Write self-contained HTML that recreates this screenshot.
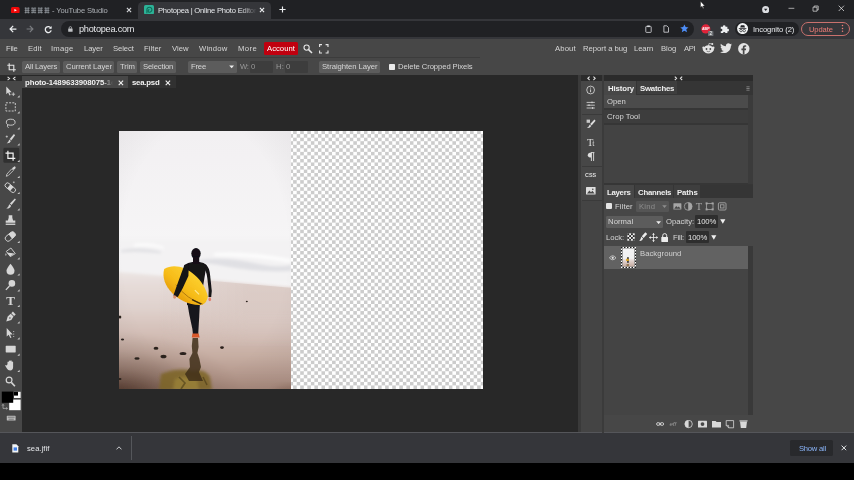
<!DOCTYPE html>
<html><head><meta charset="utf-8"><title>Photopea</title>
<style>
html,body{margin:0;padding:0;background:#000;}
body{width:854px;height:480px;overflow:hidden;position:relative;font-family:"Liberation Sans",sans-serif;}
#r{position:absolute;left:0;top:0;width:854px;height:480px;overflow:hidden;}
#r span,#r svg{will-change:transform;}
#r div,#r span,#r svg{position:absolute;display:block;}
#r span{white-space:nowrap;}
</style></head><body><div id="r">
<div style="left:0px;top:0px;width:854px;height:18.5px;background:#202124;"></div>
<div style="left:138.2px;top:1.6px;width:133.2px;height:17.4px;background:#35363a;border-radius:4.5px 4.5px 0 0;"></div>
<div style="left:0px;top:18.5px;width:854px;height:20.5px;background:#35363a;"></div>
<div style="left:60.5px;top:21.1px;width:633.5px;height:15.8px;background:#202124;border-radius:8px;"></div>
<div style="left:0px;top:39px;width:854px;height:393.5px;background:#474747;"></div>
<div style="left:21.8px;top:75px;width:556.6px;height:357.5px;background:#282828;"></div>
<div style="left:578.4px;top:75px;width:2.6px;height:357.5px;background:#3a3a3a;"></div>
<div style="left:0px;top:75px;width:21.8px;height:6px;background:#2b2b2b;"></div>
<div style="left:0px;top:432.3px;width:854px;height:30.4px;background:#35363a;border-top:0.6px solid #55565a;"></div>
<div style="left:0px;top:462.7px;width:854px;height:17.3px;background:#000;"></div>
<div style="left:290.4px;top:131.2px;width:192.8px;height:258.1px;background-color:#fff;background-image:conic-gradient(#ccc 25%,#fff 0 50%,#ccc 0 75%,#fff 0);background-size:7.08px 7.08px;background-position:-0.4px -0.4px;"></div>
<svg style="left:118.8px;top:131.2px;overflow:hidden;" width="171.6" height="258.1" viewBox="0 0 171.6 258.1">
<defs>
<linearGradient id="sky" x1="0" y1="0" x2="0" y2="1"><stop offset="0" stop-color="#f2f0f2"/><stop offset="0.45" stop-color="#f6f5f6"/><stop offset="1" stop-color="#f5f4f5"/></linearGradient>
<radialGradient id="vig" cx="0.5" cy="0.45" r="0.8"><stop offset="0.6" stop-color="#000" stop-opacity="0"/><stop offset="1" stop-color="#403040" stop-opacity="0.07"/></radialGradient>
<linearGradient id="sand" x1="0" y1="0" x2="0" y2="1">
<stop offset="0" stop-color="#ece6e4"/><stop offset="0.1" stop-color="#e6dcd9"/><stop offset="0.3" stop-color="#dfd1cc"/><stop offset="0.5" stop-color="#d3beb6"/><stop offset="0.68" stop-color="#c6ada2"/><stop offset="0.85" stop-color="#b2968a"/><stop offset="1" stop-color="#9c7e70"/></linearGradient>
<radialGradient id="sdl" gradientUnits="userSpaceOnUse" cx="0" cy="0" r="1" gradientTransform="translate(-8 272) scale(135 72)"><stop offset="0" stop-color="#2e1a10" stop-opacity="0.85"/><stop offset="0.22" stop-color="#3a2216" stop-opacity="0.68"/><stop offset="0.5" stop-color="#4a3024" stop-opacity="0.34"/><stop offset="0.75" stop-color="#4a3024" stop-opacity="0.12"/><stop offset="1" stop-color="#4a3024" stop-opacity="0"/></radialGradient>
<linearGradient id="sandl" x1="0" y1="0" x2="1" y2="0"><stop offset="0" stop-color="#5a3a2c" stop-opacity="0.22"/><stop offset="0.3" stop-color="#5a3a2c" stop-opacity="0"/><stop offset="0.8" stop-color="#5a3a2c" stop-opacity="0"/><stop offset="1" stop-color="#5a3a2c" stop-opacity="0.12"/></linearGradient>
<linearGradient id="brd" x1="0" y1="0" x2="0" y2="1"><stop offset="0" stop-color="#fccf2e"/><stop offset="0.6" stop-color="#f6bb18"/><stop offset="1" stop-color="#e79f0c"/></linearGradient>
<linearGradient id="pk" gradientUnits="userSpaceOnUse" x1="40" y1="0" x2="130" y2="0"><stop offset="0" stop-color="#d8c7c1" stop-opacity="0"/><stop offset="1" stop-color="#d8c7c1" stop-opacity="0.75"/></linearGradient>
<linearGradient id="pkv" x1="0" y1="0" x2="0" y2="1"><stop offset="0.5" stop-color="#fff"/><stop offset="1" stop-color="#000"/></linearGradient>
<mask id="pkm" maskUnits="userSpaceOnUse" x="0" y="140" width="180" height="80"><rect x="0" y="140" width="180" height="80" fill="url(#pkv)"/></mask>
<filter id="b1"><feGaussianBlur stdDeviation="0.55"/></filter>
<filter id="b2"><feGaussianBlur stdDeviation="1.6"/></filter>
<filter id="b3"><feGaussianBlur stdDeviation="3"/></filter>
</defs>
<rect width="172" height="259" fill="url(#sky)"/>
<!-- sea -->
<rect x="-5" y="108" width="182" height="44" fill="#f3f2f3" filter="url(#b3)"/>
<g filter="url(#b2)">
<path d="M2 119 Q20 115 42 120.5 L42 122.5 Q20 120 2 121.5Z" fill="#e2e2e5"/>
<path d="M80 129 Q105 125 140 133 Q160 137 172 134 L172 140 Q140 142 105 135 Q90 132 80 131.5Z" fill="#e0e0e4"/>
<path d="M95 122 Q130 120 172 128 L172 132 Q130 125 95 125Z" fill="#fcfcfc"/>
<path d="M15 113 Q30 110 45 116 L45 118 Q30 114 15 116Z" fill="#fbfbfb"/>
</g>
<!-- sand -->
<g filter="url(#b2)">
<path d="M-5 140.5 L177 156.5 L177 265 L-5 265Z" fill="url(#sand)"/>
<path d="M-5 140.5 L177 156.5 L177 265 L-5 265Z" fill="url(#sdl)"/>
</g>

<ellipse cx="178" cy="266" rx="26" ry="12" fill="#6a4838" opacity="0.3" filter="url(#b3)"/>
<path d="M40 145.2 L177 157.2 L177 215 L40 215Z" fill="url(#pk)" filter="url(#b1)" mask="url(#pkm)"/>
<rect width="172" height="259" fill="url(#vig)"/>
<!-- reflection -->
<g filter="url(#b2)">
<path d="M42 243 Q60 236 74 240 Q86 237 91 246 L93 259 L40 259Z" fill="#7d6424" opacity="0.85"/>
<path d="M56 248 Q66 244 78 248 L80 259 L54 259Z" fill="#a38a3a" opacity="0.6"/>
</g>
<g filter="url(#b1)">
<path d="M73.6 207 L79 207 L79.6 216 L78.4 222 L80.4 228 L82 236 L80 241 L84 250 L70 250 L66 243 L71 236 L70.4 228 L73.4 222 L72.8 215Z" fill="#3e3018" opacity="0.85"/>
<path d="M60 246 L66 252 L62 258M84 246 L88 254" stroke="#4a3a18" stroke-width="1.6" fill="none" opacity="0.6"/>
</g>
<!-- stones -->
<g fill="#2a201c" filter="url(#b1)">
<ellipse cx="3.5" cy="208.5" rx="1.6" ry="1"/><ellipse cx="37" cy="217.3" rx="2.4" ry="1.5"/><ellipse cx="18" cy="227.5" rx="2.6" ry="1.3"/>
<ellipse cx="44.5" cy="225.5" rx="3" ry="1.8"/><ellipse cx="64" cy="222.5" rx="3.4" ry="1.6"/><ellipse cx="103" cy="216.6" rx="1.9" ry="1.3"/>
<ellipse cx="127.8" cy="170.5" rx="1" ry="0.8"/><ellipse cx="1" cy="248" rx="1.5" ry="1"/><ellipse cx="1" cy="186" rx="1.3" ry="1.6"/>
</g>
<!-- surfer -->
<g filter="url(#b1)">
<!-- legs -->
<path d="M68 170 L81 170 L80.2 186 L79.4 200 L79.2 204 L74 204 L73.4 198 L70.4 184Z" fill="#17151a"/>
<path d="M73.4 202.4 L79.6 202.4 L80.6 206.4 L72.8 206.4Z" fill="#d8582c"/>
<!-- torso + head -->
<path d="M65.4 134 Q69 131.6 73.5 131 L80.5 131 Q85 131.6 87.6 134 L86.4 141 L84.6 152 L82.6 163 L81 174 L68 174 L68.6 160 L66.8 146Z" fill="#141217"/>
<path d="M86.6 133.4 Q90.6 136 91.2 145 L92.8 160 L92.2 166 L89.5 166 L89.7 159 L88.3 147 Q87.6 141 85.8 138.5Z" fill="#141217"/>
<ellipse cx="77" cy="122.6" rx="4.7" ry="5.6" fill="#121015"/>
<rect x="74" y="126" width="6.2" height="6.5" fill="#121015"/>
<ellipse cx="90.8" cy="168.3" rx="1.3" ry="2" fill="#e08070"/>
<!-- board -->
<g transform="translate(66.25 155) rotate(40)">
<path d="M-27 0.5 C-22 -16 6 -20 24 -6.5 Q27.5 -1 25 3.5 C10 19 -20 17 -27 0.5Z" fill="url(#brd)"/>
<path d="M-8 5 Q10 9 25 2.6" stroke="#b07a10" stroke-width="0.9" fill="none"/>
<path d="M14 6 L24 3.6" stroke="#3a2a10" stroke-width="1.3" fill="none"/>
<path d="M10 -3 L16 -2.4" stroke="#fff2b0" stroke-width="1.2" fill="none" opacity="0.8"/>
</g>
<!-- left arm over board -->
<path d="M65.4 134 L69.8 133.6 L69.4 145 L63.8 157 L58.8 166 L54.4 164.4 L58.6 152.5 Z" fill="#141217"/>
<ellipse cx="55.6" cy="166" rx="1.5" ry="1.8" fill="#d89070"/>
</g>
</svg>
<svg style="left:11.4px;top:6.6px;" width="8.6" height="6.4" viewBox="0 0 8.6 6.4"><rect width="8.6" height="6.4" rx="1.6" fill="#f00808"/><path d="M3.4 1.9 L5.9 3.2 L3.4 4.5Z" fill="#fff"/></svg>
<svg style="left:24.2px;top:6.6px;" width="27" height="7" viewBox="0 0 27 7"><g transform="translate(0.0,0)" stroke="#9aa0a6" stroke-width="0.7" fill="none" opacity="0.95"><path d="M0.6 1.2H5.6M0.6 3.4H5.6M0.6 5.6H5.6M1.6 0.4V6.4M4.4 0.4V6.4M3 1.2V5.6"/></g><g transform="translate(6.6,0)" stroke="#9aa0a6" stroke-width="0.7" fill="none" opacity="0.95"><path d="M0.6 1.2H5.6M0.6 3.4H5.6M0.6 5.6H5.6M1.6 0.4V6.4M4.4 0.4V6.4M3 1.2V5.6"/></g><g transform="translate(13.2,0)" stroke="#9aa0a6" stroke-width="0.7" fill="none" opacity="0.95"><path d="M0.6 1.2H5.6M0.6 3.4H5.6M0.6 5.6H5.6M1.6 0.4V6.4M4.4 0.4V6.4M3 1.2V5.6"/></g><g transform="translate(19.799999999999997,0)" stroke="#9aa0a6" stroke-width="0.7" fill="none" opacity="0.95"><path d="M0.6 1.2H5.6M0.6 3.4H5.6M0.6 5.6H5.6M1.6 0.4V6.4M4.4 0.4V6.4M3 1.2V5.6"/></g></svg>
<span style="left:52.30px;top:5.74px;font-size:7.6px;line-height:9.12px;letter-spacing:-0.149px;color:#abafb4;">- YouTube Studio</span>
<svg style="left:126.1px;top:6.7px;" width="6" height="6" viewBox="0 0 6 6"><path d="M0.9 0.9L5.1 5.1M5.1 0.9L0.9 5.1" stroke="#d4d6d9" stroke-width="1.15" fill="none"/></svg>
<svg style="left:143.7px;top:4.7px;" width="10" height="9.4" viewBox="0 0 10 9.4"><rect width="10" height="9.4" rx="1.6" fill="#2db297"/><path d="M2.9 8.2 V4.7 A2.5 2.5 0 1 1 5.4 7.2 A1.3 1.3 0 1 1 5.4 4.6" stroke="#0e6b58" stroke-width="1.1" fill="none"/></svg>
<div style="left:157.5px;top:4px;width:99px;height:13px;overflow:hidden;-webkit-mask-image:linear-gradient(90deg,#000 84%,transparent 100%);mask-image:linear-gradient(90deg,#000 84%,transparent 100%);"><span style="left:0;top:1.6px;font-size:7.6px;line-height:9.4px;letter-spacing:-0.212px;color:#e8eaed;">Photopea | Online Photo Editor</span></div>
<svg style="left:259.3px;top:6.7px;" width="6" height="6" viewBox="0 0 6 6"><path d="M0.9 0.9L5.1 5.1M5.1 0.9L0.9 5.1" stroke="#eceef0" stroke-width="1.15" fill="none"/></svg>
<svg style="left:279.2px;top:6.2px;" width="7" height="7" viewBox="0 0 7 7"><path d="M3.5 0.4V6.6M0.4 3.5H6.6" stroke="#eceef0" stroke-width="1.15" fill="none"/></svg>
<svg style="left:700px;top:1px;" width="6" height="8" viewBox="0 0 6 8"><path d="M0.5 0.3 L0.5 6.6 L2 5.2 L3 7.6 L3.9 7.2 L2.9 4.9 L4.9 4.9Z" fill="#fff" stroke="#111" stroke-width="0.4"/></svg>
<svg style="left:762.2px;top:6.1px;" width="7.4" height="7.4" viewBox="0 0 7.4 7.4"><circle cx="3.7" cy="3.7" r="3.6" fill="#dadce0"/><path d="M2 2.8H5.4L3.7 5Z" fill="#202124"/></svg>
<svg style="left:787.5px;top:5px;" width="7" height="7" viewBox="0 0 7 7"><path d="M0.5 3.3H6.3" stroke="#e0e0e0" stroke-width="0.7"/></svg>
<svg style="left:812px;top:5px;" width="7" height="7" viewBox="0 0 7 7"><path d="M1 2.2H5V6.2H1Z M2.2 2.2V1H6.2V5H5" stroke="#e0e0e0" stroke-width="0.7" fill="none"/></svg>
<svg style="left:838px;top:5px;" width="7" height="7" viewBox="0 0 7 7"><path d="M0.7 0.7L6 6M6 0.7L0.7 6" stroke="#e8e8e8" stroke-width="0.75"/></svg>
<svg style="left:8.5px;top:24.9px;" width="8" height="8" viewBox="0 0 8 8"><path d="M7.4 4H1.4M4.2 0.9L1.1 4L4.2 7.1" stroke="#eceef0" stroke-width="1.25" fill="none"/></svg>
<svg style="left:26.2px;top:24.9px;" width="8" height="8" viewBox="0 0 8 8"><path d="M0.6 4H6.6M3.8 0.9L6.9 4L3.8 7.1" stroke="#7a7c80" stroke-width="1.2" fill="none"/></svg>
<svg style="left:44px;top:24.6px;" width="8.6" height="8.6" viewBox="0 0 8.6 8.6"><path d="M7 3.2A3 3 0 1 0 7.2 5.4" stroke="#eceef0" stroke-width="1.3" fill="none"/><path d="M7.6 1V3.7H4.9Z" fill="#e8eaed"/></svg>
<svg style="left:67.6px;top:26px;" width="5" height="6" viewBox="0 0 5 6"><rect x="0.2" y="2.5" width="4.4" height="3.3" rx="0.5" fill="#c0c2c5"/><path d="M1.2 2.7V1.8A1.2 1.2 0 0 1 3.6 1.8V2.7" stroke="#c0c2c5" stroke-width="0.75" fill="none"/></svg>
<span style="left:79.00px;top:23.88px;font-size:9.2px;line-height:11.04px;letter-spacing:-0.246px;color:#e8eaed;">photopea.com</span>
<svg style="left:645.2px;top:24.8px;" width="7" height="8" viewBox="0 0 7 8"><rect x="0.8" y="1.4" width="5.4" height="6" rx="0.6" stroke="#dadce0" stroke-width="0.8" fill="none"/><rect x="2.2" y="0.5" width="2.6" height="1.6" fill="#dadce0"/></svg>
<svg style="left:663.2px;top:24.8px;" width="6.4" height="8" viewBox="0 0 6.4 8"><path d="M0.9 0.8H3.8L5.5 2.5V7.2H0.9Z" stroke="#dadce0" stroke-width="0.8" fill="none"/></svg>
<svg style="left:679.8px;top:24.4px;" width="8.8" height="8.6" viewBox="0 0 8.8 8.6"><path d="M4.4 0.4L5.6 3.1L8.5 3.4L6.3 5.3L7 8.2L4.4 6.7L1.8 8.2L2.5 5.3L0.3 3.4L3.2 3.1Z" fill="#4d8df6"/></svg>
<svg style="left:701.2px;top:24px;" width="12.6" height="12.4" viewBox="0 0 12.6 12.4"><circle cx="4.8" cy="4.9" r="4.6" fill="#e0243a"/><text x="4.8" y="6.3" font-size="3.6" font-weight="bold" fill="#fff" text-anchor="middle" font-family="Liberation Sans">ABP</text><rect x="7" y="7" width="5.4" height="5.2" rx="0.8" fill="#6e7276"/><text x="9.7" y="11.3" font-size="4.6" fill="#fff" text-anchor="middle" font-family="Liberation Sans">2</text></svg>
<svg style="left:719.6px;top:24.2px;" width="9.4" height="9.4" viewBox="0 0 9.4 9.4"><path d="M0.8 2.8H3A1.25 1.25 0 1 1 5.4 2.8H7.4V4.9A1.25 1.25 0 1 1 7.4 7.3V9.2H5.4A1.2 1.2 0 1 0 3 9.2H0.8V7.2A1.2 1.2 0 1 0 0.8 4.9Z" fill="#eceef0"/></svg>
<div style="left:735.2px;top:21.8px;width:63.8px;height:13.8px;background:#202124;border-radius:7px;"></div>
<svg style="left:736.6px;top:23.1px;" width="11.2" height="11.2" viewBox="0 0 11.2 11.2"><circle cx="5.6" cy="5.6" r="5.5" fill="#f1f3f4"/><path d="M3.2 4.6L3.9 2.2H7.3L8 4.6Z M1.8 5H9.4V5.7H1.8Z" fill="#202124"/><circle cx="4" cy="7.6" r="1.25" fill="none" stroke="#202124" stroke-width="0.7"/><circle cx="7.2" cy="7.6" r="1.25" fill="none" stroke="#202124" stroke-width="0.7"/></svg>
<span style="left:753.00px;top:24.74px;font-size:7.6px;line-height:9.12px;letter-spacing:-0.071px;color:#e8eaed;">Incognito (2)</span>
<div style="left:801.4px;top:21.8px;width:48.4px;height:14px;background:transparent;border-radius:7.5px;border:0.8px solid #c9716d;box-sizing:border-box;"></div>
<span style="left:809.20px;top:24.74px;font-size:7.6px;line-height:9.12px;letter-spacing:-0.122px;color:#ee7d77;">Update</span>
<svg style="left:840.5px;top:24.4px;" width="3" height="9" viewBox="0 0 3 9"><circle cx="1.5" cy="1.6" r="0.75" fill="#ee7d77"/><circle cx="1.5" cy="4.4" r="0.75" fill="#ee7d77"/><circle cx="1.5" cy="7.2" r="0.75" fill="#ee7d77"/></svg>
<span style="left:6.00px;top:43.78px;font-size:7.7px;line-height:9.24px;letter-spacing:-0.203px;color:#d6d6d6;">File</span>
<span style="left:28.00px;top:43.78px;font-size:7.7px;line-height:9.24px;letter-spacing:0.110px;color:#d6d6d6;">Edit</span>
<span style="left:51.30px;top:43.78px;font-size:7.7px;line-height:9.24px;letter-spacing:0.225px;color:#d6d6d6;">Image</span>
<span style="left:84.00px;top:43.78px;font-size:7.7px;line-height:9.24px;letter-spacing:-0.091px;color:#d6d6d6;">Layer</span>
<span style="left:113.00px;top:43.78px;font-size:7.7px;line-height:9.24px;letter-spacing:-0.120px;color:#d6d6d6;">Select</span>
<span style="left:144.40px;top:43.78px;font-size:7.7px;line-height:9.24px;letter-spacing:0.058px;color:#d6d6d6;">Filter</span>
<span style="left:172.30px;top:43.78px;font-size:7.7px;line-height:9.24px;letter-spacing:0.016px;color:#d6d6d6;">View</span>
<span style="left:199.20px;top:43.78px;font-size:7.7px;line-height:9.24px;letter-spacing:0.203px;color:#d6d6d6;">Window</span>
<span style="left:238.00px;top:43.78px;font-size:7.7px;line-height:9.24px;letter-spacing:0.419px;color:#d6d6d6;">More</span>
<div style="left:263.7px;top:41.6px;width:34.4px;height:13.3px;background:#c0000f;border-radius:1.5px;"></div>
<span style="left:267.20px;top:43.78px;font-size:7.7px;line-height:9.24px;letter-spacing:0.013px;color:#fff;">Account</span>
<svg style="left:303px;top:43.6px;" width="10" height="10" viewBox="0 0 10 10"><circle cx="3.6" cy="3.6" r="2.6" stroke="#e6e6e6" stroke-width="1.1" fill="none"/><path d="M5.6 5.6L9 9" stroke="#e6e6e6" stroke-width="1.5"/></svg>
<svg style="left:319.2px;top:43.6px;" width="9.6" height="9.6" viewBox="0 0 9.6 9.6"><path d="M0.6 3V0.6H3M6.6 0.6H9V3M9 6.6V9H6.6M3 9H0.6V6.6" stroke="#e6e6e6" stroke-width="1.1" fill="none"/></svg>
<span style="left:554.70px;top:43.78px;font-size:7.7px;line-height:9.24px;letter-spacing:0.144px;color:#d6d6d6;">About</span>
<span style="left:582.50px;top:43.78px;font-size:7.7px;line-height:9.24px;letter-spacing:-0.011px;color:#d6d6d6;">Report a bug</span>
<span style="left:634.00px;top:43.78px;font-size:7.7px;line-height:9.24px;letter-spacing:-0.099px;color:#d6d6d6;">Learn</span>
<span style="left:661.00px;top:43.78px;font-size:7.7px;line-height:9.24px;letter-spacing:-0.004px;color:#d6d6d6;">Blog</span>
<span style="left:683.50px;top:43.78px;font-size:7.7px;line-height:9.24px;letter-spacing:-0.356px;color:#d6d6d6;">API</span>
<svg style="left:701.6px;top:42.2px;" width="13" height="12.4" viewBox="0 0 13 12.4"><circle cx="6.4" cy="7.4" r="4.1" fill="#e4e4e4"/><ellipse cx="6.4" cy="7.6" rx="5.6" ry="3.5" fill="#e4e4e4"/><circle cx="1.6" cy="5.8" r="1.3" fill="#e4e4e4"/><circle cx="11.2" cy="5.8" r="1.3" fill="#e4e4e4"/><path d="M6.4 4L7.1 1.4L10 2" stroke="#e4e4e4" stroke-width="0.7" fill="none"/><circle cx="10.3" cy="2" r="1" fill="#e4e4e4"/><circle cx="4.5" cy="7" r="0.9" fill="#474747"/><circle cx="8.3" cy="7" r="0.9" fill="#474747"/><path d="M4.6 9.1Q6.4 10.3 8.2 9.1" stroke="#474747" stroke-width="0.6" fill="none"/></svg>
<svg style="left:720.4px;top:43.2px;" width="12.4" height="10.4" viewBox="0 0 12.4 10.4"><path d="M12 1.4C11.5 1.6 11.1 1.7 10.6 1.8C11.1 1.5 11.5 1 11.7 0.4C11.2 0.7 10.7 0.9 10.1 1C9.7 0.5 9 0.2 8.4 0.2C7 0.2 5.9 1.3 5.9 2.7C5.9 2.9 5.9 3.1 6 3.3C3.9 3.2 2.1 2.2 0.9 0.7C0.7 1.1 0.6 1.5 0.6 1.9C0.6 2.8 1 3.5 1.7 4C1.3 4 0.9 3.9 0.6 3.7C0.6 4.9 1.4 5.9 2.6 6.1C2.2 6.2 1.8 6.2 1.5 6.2C1.8 7.2 2.7 7.9 3.8 7.9C2.9 8.6 1.8 9 0.7 9C0.5 9 0.3 9 0.1 9C1.2 9.7 2.5 10.1 3.9 10.1C8.4 10.1 10.9 6.3 10.9 3C10.9 2.9 10.9 2.8 10.9 2.7C11.4 2.3 11.7 1.9 12 1.4Z" fill="#e4e4e4"/></svg>
<svg style="left:737.7px;top:42.6px;" width="11.6" height="11.6" viewBox="0 0 11.6 11.6"><circle cx="5.8" cy="5.8" r="5.7" fill="#e4e4e4"/><path d="M6.5 11.4V7.2H7.9L8.1 5.6H6.5V4.6C6.5 4.1 6.7 3.8 7.3 3.8H8.2V2.4C8 2.4 7.5 2.3 6.9 2.3C5.6 2.3 4.8 3.1 4.8 4.4V5.6H3.4V7.2H4.8V11.4Z" fill="#474747"/></svg>
<div style="left:0px;top:57.2px;width:480px;height:0.6px;background:#3c3c3c;"></div>
<svg style="left:6.6px;top:62.8px;" width="9" height="9" viewBox="0 0 9 9"><path d="M2.2 0.3V6.8H8.8M0.3 2.2H6.8V8.7" stroke="#e6e6e6" stroke-width="1.1" fill="none"/></svg>
<div style="left:22.2px;top:60.8px;width:37.5px;height:12.2px;background:#5c5c5c;border-radius:1.5px;"></div>
<span style="left:25.10px;top:62.28px;font-size:7.7px;line-height:9.24px;letter-spacing:-0.168px;color:#d6d6d6;">All Layers</span>
<div style="left:62.7px;top:60.8px;width:51.3px;height:12.2px;background:#5c5c5c;border-radius:1.5px;"></div>
<span style="left:65.60px;top:62.28px;font-size:7.7px;line-height:9.24px;letter-spacing:-0.081px;color:#d6d6d6;">Current Layer</span>
<div style="left:116.8px;top:60.8px;width:20.200000000000003px;height:12.2px;background:#5c5c5c;border-radius:1.5px;"></div>
<span style="left:119.70px;top:62.28px;font-size:7.7px;line-height:9.24px;letter-spacing:-0.036px;color:#d6d6d6;">Trim</span>
<div style="left:140.2px;top:60.8px;width:35.60000000000002px;height:12.2px;background:#5c5c5c;border-radius:1.5px;"></div>
<span style="left:143.10px;top:62.28px;font-size:7.7px;line-height:9.24px;letter-spacing:-0.160px;color:#d6d6d6;">Selection</span>
<div style="left:318.7px;top:60.8px;width:60.900000000000034px;height:12.2px;background:#5c5c5c;border-radius:1.5px;"></div>
<span style="left:321.60px;top:62.28px;font-size:7.7px;line-height:9.24px;letter-spacing:-0.054px;color:#d6d6d6;">Straighten Layer</span>
<div style="left:188px;top:60.6px;width:48.6px;height:12.4px;background:#5c5c5c;border-radius:1.5px;"></div>
<span style="left:190.60px;top:62.28px;font-size:7.7px;line-height:9.24px;letter-spacing:-0.211px;color:#d6d6d6;">Free</span>
<svg style="left:228.6px;top:65.4px;" width="5.4" height="3.6" viewBox="0 0 5.4 3.6"><path d="M0.2 0.4H5.2L2.7 3.2Z" fill="#eee"/></svg>
<span style="left:239.80px;top:62.28px;font-size:7.7px;line-height:9.24px;letter-spacing:-0.450px;color:#9a9a9a;">W:</span>
<div style="left:249.6px;top:60.6px;width:23.4px;height:12.4px;background:#3d3d3d;border-radius:1px;"></div>
<span style="left:251.40px;top:62.28px;font-size:7.7px;line-height:9.24px;letter-spacing:0.000px;color:#9a9a9a;">0</span>
<span style="left:275.60px;top:62.28px;font-size:7.7px;line-height:9.24px;letter-spacing:0.300px;color:#9a9a9a;">H:</span>
<div style="left:284.8px;top:60.6px;width:23px;height:12.4px;background:#3d3d3d;border-radius:1px;"></div>
<span style="left:286.40px;top:62.28px;font-size:7.7px;line-height:9.24px;letter-spacing:0.000px;color:#9a9a9a;">0</span>
<div style="left:389px;top:63.8px;width:5.6px;height:5.8px;background:#eaeaea;border-radius:0.8px;"></div>
<span style="left:397.50px;top:62.28px;font-size:7.7px;line-height:9.24px;letter-spacing:-0.091px;color:#d6d6d6;">Delete Cropped Pixels</span>
<svg style="left:6.6px;top:75.6px;" width="9" height="5" viewBox="0 0 9 5"><path d="M0.6 0.8L2.6 2.5L0.6 4.2M8.4 0.8L6.4 2.5L8.4 4.2" stroke="#e4e4e4" stroke-width="1.05" fill="none"/></svg>
<div style="left:22.2px;top:76.4px;width:105.6px;height:12px;background:#474747;"></div>
<div style="left:25.1px;top:76.4px;width:88px;height:12px;overflow:hidden;-webkit-mask-image:linear-gradient(90deg,#000 88%,transparent 100%);mask-image:linear-gradient(90deg,#000 88%,transparent 100%);"><span style="left:0;top:1.7px;font-size:7.8px;line-height:10px;font-weight:bold;letter-spacing:-0.068px;color:#f2f2f2;">photo-1489633908075-1c</span></div>
<svg style="left:118.4px;top:79.6px;" width="5.8" height="5.8" viewBox="0 0 5.8 5.8"><path d="M0.7 0.7L5.1 5.1M5.1 0.7L0.7 5.1" stroke="#f0f0f0" stroke-width="1.1"/></svg>
<div style="left:128.4px;top:76.4px;width:47.4px;height:12px;background:#313131;"></div>
<span style="left:131.90px;top:78.22px;font-size:7.8px;line-height:9.36px;letter-spacing:-0.225px;color:#f2f2f2;font-weight:bold;">sea.psd</span>
<svg style="left:165.2px;top:79.6px;" width="5.8" height="5.8" viewBox="0 0 5.8 5.8"><path d="M0.7 0.7L5.1 5.1M5.1 0.7L0.7 5.1" stroke="#f0f0f0" stroke-width="1.1"/></svg>
<svg style="left:0px;top:0px;" width="22" height="432" viewBox="0 0 22 432"><rect x="3.4" y="147.8" width="15.8" height="15" rx="1.4" fill="#303030"/><g transform="translate(-0.7,91)"><path d="M7 -4.6V3.2L8.8 1.6L10.2 4.6L11.4 4L10 1.2H12.4Z" fill="#d6d6d6"/><path d="M14 1.4V5M12.2 3.2H15.8" stroke="#d6d6d6" stroke-width="0.8"/></g><g transform="translate(-0.7,107)"><rect x="6.6" y="-4.2" width="9.4" height="8.2" fill="none" stroke="#d6d6d6" stroke-width="0.9" stroke-dasharray="2 1.2"/></g><g transform="translate(-0.7,123)"><ellipse cx="11.4" cy="-0.8" rx="4.4" ry="3" fill="none" stroke="#d6d6d6" stroke-width="0.9"/><path d="M8.4 1.6Q7.4 3.6 9.2 4.8" stroke="#d6d6d6" stroke-width="0.9" fill="none"/></g><g transform="translate(-0.7,139)"><path d="M14.6 -5L15.8 -3.8L12 1.4L10.4 0Z" fill="#d6d6d6"/><path d="M10 0.6L11.6 2Q10.6 4.6 7.4 4.2Q9.4 3 10 0.6Z" fill="#d6d6d6"/><path d="M6.4 -2.4H8.6M7.5 -3.5V-1.3" stroke="#d6d6d6" stroke-width="0.7"/></g><g transform="translate(-0.7,155.7)"><path d="M8.6 -5V2.6H16M6.2 -2.6H13.8V5" stroke="#f4f4f4" stroke-width="1.2" fill="none"/></g><g transform="translate(-0.7,171.5)"><path d="M15.4 -5.2Q16.8 -4.8 16.2 -3.2L14.4 -1.4L12.6 -3.2Z" fill="#d6d6d6"/><path d="M12.4 -2.6L14 -1L9 4L7 4.8L7.6 2.6Z" fill="none" stroke="#d6d6d6" stroke-width="0.8"/></g><g transform="translate(-0.7,187.7)"><g transform="rotate(40 11 0)"><rect x="5" y="-2.4" width="12" height="4.8" rx="2.2" fill="none" stroke="#d6d6d6" stroke-width="0.9"/><rect x="9" y="-2.4" width="4" height="4.8" fill="#d6d6d6"/></g><path d="M13.6 -5.4H15.4M14.5 -6.3V-4.5" stroke="#d6d6d6" stroke-width="0.6"/></g><g transform="translate(-0.7,204)"><path d="M15.6 -5.4L16.6 -4.4L12.2 1L10.6 -0.4Z" fill="#d6d6d6"/><path d="M10 0.2L11.8 1.8Q11 4.8 7 4.6Q9.2 3.4 10 0.2Z" fill="#d6d6d6"/></g><g transform="translate(-0.7,220.2)"><path d="M9.4 -5H13V-2.4L13.8 0.4H16V2.6H6.4V0.4H8.6L9.4 -2.4Z" fill="#d6d6d6"/><rect x="6.4" y="3.4" width="9.6" height="1.3" fill="#d6d6d6"/></g><g transform="translate(-0.7,236.5)"><g transform="rotate(-40 11 0)"><rect x="5.4" y="-2.8" width="11.2" height="5.6" rx="2.4" fill="none" stroke="#d6d6d6" stroke-width="0.9"/><path d="M11 -2.8H14.2Q16.6 -2.8 16.6 0Q16.6 2.8 14.2 2.8H11Z" fill="#d6d6d6"/></g></g><g transform="translate(-0.7,253)"><path d="M7 -1.6L11.6 -5L16 0.6L11 3.6Z" fill="none" stroke="#d6d6d6" stroke-width="0.9"/><path d="M7.4 -0.6L15 0.4L11 3.2Z" fill="#d6d6d6"/><path d="M6.6 0Q5.4 2.2 6.6 3Q7.8 2.2 6.6 0Z" fill="#d6d6d6"/></g><g transform="translate(-0.7,269.2)"><path d="M11.2 -5.4Q15.2 -0.6 15.2 1.6A4 4 0 0 1 7.2 1.6Q7.2 -0.6 11.2 -5.4Z" fill="#d6d6d6"/></g><g transform="translate(-0.7,285)"><circle cx="12.6" cy="-1.6" r="3.3" fill="#d6d6d6"/><path d="M10.2 1L6.6 4.8" stroke="#d6d6d6" stroke-width="1.2"/></g><g transform="translate(-0.7,300.6)"><text x="11.2" y="4.6" font-family="Liberation Serif" font-weight="bold" font-size="13" text-anchor="middle" fill="#d6d6d6">T</text></g><g transform="translate(-0.7,317)"><path d="M13.6 -5.4L16.4 -2.6L14.8 -1L12 -3.8Z" fill="#d6d6d6"/><path d="M11.4 -3.2L14.2 -0.4L12 3L7 4.6L8.4 -0.6Z" fill="#d6d6d6"/><circle cx="10.6" cy="1" r="0.8" fill="#474747"/></g><g transform="translate(-0.7,333)"><path d="M7.4 -5V3.6L9.4 1.8L11 5L12.2 4.4L10.6 1.4H13.4Z" fill="#d6d6d6"/><path d="M14.4 -2V-1M14.4 0.6V1.6M14.4 3V4" stroke="#d6d6d6" stroke-width="0.8"/></g><g transform="translate(-0.7,349.4)"><rect x="6.4" y="-3.6" width="10" height="6.6" rx="0.6" fill="#d6d6d6"/></g><g transform="translate(-0.7,365.6)"><path d="M8.2 -1.6V-3.6Q8.9 -4.4 9.6 -3.6V-4.6Q10.3 -5.4 11 -4.6V-4.9Q11.7 -5.6 12.4 -4.8V-3.8Q13.2 -4.4 13.8 -3.6V1.4Q13.8 4.8 10.8 4.8Q8.6 4.8 7.6 2.8L5.8 -0.2Q6.6 -1.2 7.6 0Z" fill="#d6d6d6"/></g><g transform="translate(-0.7,381.6)"><circle cx="9.8" cy="-1.6" r="2.9" fill="none" stroke="#d6d6d6" stroke-width="1.2"/><path d="M12 0.8L15.6 4.6" stroke="#d6d6d6" stroke-width="1.6"/></g><path d="M19.6 95.2V97.4H17.4Z" fill="#cfcfcf"/><path d="M19.6 111.2V113.4H17.4Z" fill="#cfcfcf"/><path d="M19.6 127.2V129.4H17.4Z" fill="#cfcfcf"/><path d="M19.6 143.2V145.4H17.4Z" fill="#cfcfcf"/><path d="M19.6 159.7V161.9H17.4Z" fill="#cfcfcf"/><path d="M19.6 175.7V177.9H17.4Z" fill="#cfcfcf"/><path d="M19.6 191.89999999999998V194.1H17.4Z" fill="#cfcfcf"/><path d="M19.6 208.2V210.4H17.4Z" fill="#cfcfcf"/><path d="M19.6 240.7V242.9H17.4Z" fill="#cfcfcf"/><path d="M19.6 257.2V259.4H17.4Z" fill="#cfcfcf"/><path d="M19.6 273.4V275.59999999999997H17.4Z" fill="#cfcfcf"/><path d="M19.6 289.2V291.4H17.4Z" fill="#cfcfcf"/><path d="M19.6 304.8V307.0H17.4Z" fill="#cfcfcf"/><path d="M19.6 321.2V323.4H17.4Z" fill="#cfcfcf"/><path d="M19.6 337.2V339.4H17.4Z" fill="#cfcfcf"/><path d="M19.6 353.59999999999997V355.79999999999995H17.4Z" fill="#cfcfcf"/><path d="M19.6 369.8V372.0H17.4Z" fill="#cfcfcf"/><rect x="14" y="391.8" width="6.6" height="6.2" fill="#fff"/><rect x="14" y="391.8" width="4" height="3.8" fill="#000"/><rect x="9.2" y="399.6" width="11.4" height="10.6" fill="#fff"/><rect x="1.8" y="391.6" width="11.4" height="11.2" fill="#000"/><path d="M3 404.4V408.4H7.4M2 405.6L3 404.4L4 405.6M6.2 407.4L7.4 408.4L6.2 409.4" stroke="#ccc" stroke-width="0.6" fill="none"/><rect x="6.8" y="415.8" width="8.8" height="4.8" rx="0.6" fill="#bdbdbd"/><path d="M7.8 417.2H14.6M8.6 419.2H13.8" stroke="#474747" stroke-width="0.6"/></svg>
<div style="left:581px;top:75px;width:21.4px;height:6px;background:#2b2b2b;"></div>
<svg style="left:587px;top:75.8px;" width="9" height="4.6" viewBox="0 0 9 4.6"><path d="M2.6 0.6L0.8 2.3L2.6 4M6.4 0.6L8.2 2.3L6.4 4" stroke="#e4e4e4" stroke-width="1.05" fill="none"/></svg>
<div style="left:602.2px;top:75px;width:1.4px;height:357.5px;background:#3b3b3b;"></div>
<div style="left:581px;top:200.6px;width:21.2px;height:231.9px;background:#444444;"></div>
<div style="left:582px;top:113.6px;width:20px;height:0.6px;background:#3a3a3a;"></div>
<div style="left:582px;top:166.2px;width:20px;height:0.6px;background:#3a3a3a;"></div>
<div style="left:582px;top:200.2px;width:20px;height:0.6px;background:#3a3a3a;"></div>
<svg style="left:581px;top:0px;" width="22" height="200" viewBox="0 0 22 200"><circle cx="9.6" cy="90" r="3.9" fill="none" stroke="#dedede" stroke-width="0.8"/><path d="M9.6 89.4V92.2" stroke="#dedede" stroke-width="0.9"/><circle cx="9.6" cy="88" r="0.55" fill="#dedede"/><path d="M5.6 102.4H13.8M5.6 105.2H13.8M5.6 108H13.8" stroke="#dedede" stroke-width="0.8"/><path d="M11 101.6V103.2M8 104.4V106M11.6 107.2V108.8" stroke="#dedede" stroke-width="1"/><path d="M13.4 119.6L14.6 120.8L10.6 125.4L9.2 124Z" fill="#dedede"/><path d="M8.8 124.6L10.2 126Q9.2 128.4 6 128Q8 126.8 8.8 124.6Z" fill="#dedede"/><rect x="5.6" y="119.6" width="3.4" height="3.2" fill="#dedede" opacity="0.85"/><text x="6" y="145.8" font-family="Liberation Serif" font-size="10.5" fill="#dedede">T</text><text x="11.2" y="145.8" font-family="Liberation Serif" font-size="8" fill="#dedede">t</text><path d="M10 152.6H13.4M10.4 152.6V161M12.6 152.6V161" stroke="#dedede" stroke-width="0.9" fill="none"/><path d="M10.4 152.6Q6.8 152.6 6.8 155.2Q6.8 157.6 10.4 157.6Z" fill="#dedede"/><text x="9.6" y="177" font-family="Liberation Sans" font-weight="bold" font-size="5.4" text-anchor="middle" fill="#dedede">CSS</text><rect x="5" y="187" width="9.6" height="7.6" rx="0.6" fill="#dedede"/><path d="M6 193.4L8.4 190.4L10 192.2L11.4 190.8L13.6 193.4Z" fill="#474747"/><circle cx="11.8" cy="189.2" r="0.8" fill="#474747"/></svg>
<div style="left:604.4px;top:75px;width:148.8px;height:6px;background:#2b2b2b;"></div>
<svg style="left:674.4px;top:75.8px;" width="9" height="4.6" viewBox="0 0 9 4.6"><path d="M0.8 0.6L2.6 2.3L0.8 4M8.2 0.6L6.4 2.3L8.2 4" stroke="#e4e4e4" stroke-width="1.05" fill="none"/></svg>
<div style="left:604.4px;top:81px;width:148.8px;height:14.2px;background:#353535;"></div>
<div style="left:604.4px;top:81px;width:32px;height:14.2px;background:#474747;"></div>
<div style="left:636.6px;top:81.4px;width:40.6px;height:13px;background:#3e3e3e;"></div>
<span style="left:607.60px;top:84.22px;font-size:7.8px;line-height:9.36px;letter-spacing:-0.112px;color:#f0f0f0;font-weight:bold;">History</span>
<span style="left:640.00px;top:84.22px;font-size:7.8px;line-height:9.36px;letter-spacing:-0.226px;color:#f0f0f0;font-weight:bold;">Swatches</span>
<svg style="left:746.2px;top:85.6px;" width="4" height="5" viewBox="0 0 4 5"><path d="M0.4 0.8H3.6M0.4 2.5H3.6M0.4 4.2H3.6" stroke="#9a9a9a" stroke-width="0.7"/></svg>
<div style="left:604.4px;top:94.8px;width:148.8px;height:90px;background:#363636;"></div>
<div style="left:604.4px;top:94.8px;width:143.8px;height:13.4px;background:#4b4b4b;"></div>
<span style="left:606.60px;top:97.18px;font-size:7.7px;line-height:9.24px;letter-spacing:-0.012px;color:#d6d6d6;">Open</span>
<div style="left:604.4px;top:110px;width:143.8px;height:13.4px;background:#3d3d3d;"></div>
<span style="left:606.60px;top:111.98px;font-size:7.7px;line-height:9.24px;letter-spacing:0.023px;color:#d6d6d6;">Crop Tool</span>
<div style="left:604.4px;top:124.6px;width:143.8px;height:58.2px;background:#434343;"></div>
<div style="left:748.2px;top:94.8px;width:5px;height:89.4px;background:#3b3b3b;"></div>
<div style="left:604.4px;top:185px;width:148.8px;height:13.1px;background:#353535;"></div>
<div style="left:604.4px;top:185px;width:29.6px;height:13.1px;background:#474747;"></div>
<div style="left:634.6px;top:185.4px;width:38.6px;height:12.7px;background:#3e3e3e;"></div>
<div style="left:674px;top:185.4px;width:25.8px;height:12.7px;background:#3e3e3e;"></div>
<span style="left:607.40px;top:187.72px;font-size:7.8px;line-height:9.36px;letter-spacing:-0.271px;color:#f0f0f0;font-weight:bold;">Layers</span>
<span style="left:637.60px;top:187.72px;font-size:7.8px;line-height:9.36px;letter-spacing:-0.244px;color:#f0f0f0;font-weight:bold;">Channels</span>
<span style="left:677.00px;top:187.72px;font-size:7.8px;line-height:9.36px;letter-spacing:-0.110px;color:#f0f0f0;font-weight:bold;">Paths</span>
<div style="left:605.7px;top:203.2px;width:6.4px;height:6.3px;background:#e4e4e4;border-radius:0.9px;"></div>
<span style="left:614.60px;top:201.98px;font-size:7.7px;line-height:9.24px;letter-spacing:0.098px;color:#d6d6d6;">Filter</span>
<div style="left:636px;top:201px;width:33.2px;height:11.4px;background:#555;border-radius:1.2px;"></div>
<span style="left:638.60px;top:201.98px;font-size:7.7px;line-height:9.24px;letter-spacing:0.196px;color:#8d8d8d;">Kind</span>
<svg style="left:661.6px;top:205.2px;" width="5" height="3.2" viewBox="0 0 5 3.2"><path d="M0.2 0.3H4.8L2.5 2.9Z" fill="#8d8d8d"/></svg>
<svg style="left:673px;top:202.2px;" width="54" height="9" viewBox="0 0 54 9"><rect x="0.4" y="1.2" width="8" height="6.4" rx="0.5" fill="#a6a6a6"/><path d="M1.2 6.8L3.2 4L4.6 5.6L5.8 4.6L7.6 6.8Z" fill="#474747"/><circle cx="15.2" cy="4.4" r="3.9" fill="none" stroke="#a6a6a6" stroke-width="0.8"/><path d="M15.2 0.5A3.9 3.9 0 0 1 15.2 8.3Z" fill="#a6a6a6"/><text x="26" y="8.2" font-family="Liberation Serif" font-size="10.5" text-anchor="middle" fill="#a6a6a6">T</text><rect x="33.6" y="1.4" width="6.4" height="6" fill="none" stroke="#a6a6a6" stroke-width="0.8"/><rect x="32.6" y="0.4" width="2" height="2" fill="#a6a6a6"/><rect x="38.6" y="0.4" width="2" height="2" fill="#a6a6a6"/><rect x="32.6" y="6.4" width="2" height="2" fill="#a6a6a6"/><rect x="38.6" y="6.4" width="2" height="2" fill="#a6a6a6"/><rect x="45.4" y="0.8" width="7.6" height="7.2" rx="1" fill="none" stroke="#a6a6a6" stroke-width="0.9"/><rect x="47.4" y="2.8" width="3.6" height="3.2" fill="none" stroke="#a6a6a6" stroke-width="0.8"/></svg>
<div style="left:605.8px;top:215.6px;width:57.4px;height:12.4px;background:#5c5c5c;border-radius:1.2px;"></div>
<span style="left:608.40px;top:217.28px;font-size:7.7px;line-height:9.24px;letter-spacing:0.077px;color:#d6d6d6;">Normal</span>
<svg style="left:655.6px;top:220.6px;" width="5.2" height="3.4" viewBox="0 0 5.2 3.4"><path d="M0.2 0.3H5L2.6 3.1Z" fill="#eee"/></svg>
<span style="left:666.20px;top:217.28px;font-size:7.7px;line-height:9.24px;letter-spacing:-0.006px;color:#d6d6d6;">Opacity:</span>
<div style="left:694.8px;top:215.4px;width:23.4px;height:12.6px;background:#2e2e2e;border-radius:1px;"></div>
<span style="left:696.60px;top:217.28px;font-size:7.7px;line-height:9.24px;letter-spacing:-0.098px;color:#e4e4e4;">100%</span>
<svg style="left:720.4px;top:219.4px;" width="5.6" height="5" viewBox="0 0 5.6 5"><path d="M0.2 0.3H5.4L2.8 4.7Z" fill="#f0f0f0"/></svg>
<span style="left:605.60px;top:232.58px;font-size:7.7px;line-height:9.24px;letter-spacing:-0.051px;color:#d6d6d6;">Lock:</span>
<svg style="left:627.2px;top:233.3px;" width="8" height="8" viewBox="0 0 8 8"><rect x="0.3" y="0.3" width="7.4" height="7.4" fill="#f0f0f0"/><rect x="0.30" y="0.30" width="1.85" height="1.85" fill="#2a2a2a"/><rect x="0.30" y="4.00" width="1.85" height="1.85" fill="#2a2a2a"/><rect x="2.15" y="2.15" width="1.85" height="1.85" fill="#2a2a2a"/><rect x="2.15" y="5.85" width="1.85" height="1.85" fill="#2a2a2a"/><rect x="4.00" y="0.30" width="1.85" height="1.85" fill="#2a2a2a"/><rect x="4.00" y="4.00" width="1.85" height="1.85" fill="#2a2a2a"/><rect x="5.85" y="2.15" width="1.85" height="1.85" fill="#2a2a2a"/><rect x="5.85" y="5.85" width="1.85" height="1.85" fill="#2a2a2a"/></svg>
<svg style="left:638.6px;top:232.4px;" width="8.6" height="9.6" viewBox="0 0 8.6 9.6"><path d="M6.4 0.3L8.2 2.1L4.6 6L2.8 4.2Z" fill="#ececec"/><path d="M2.3 4.8L4.1 6.6Q3.4 9.4 0.3 8.9Q1.8 7.4 2.3 4.8Z" fill="#ececec"/></svg>
<svg style="left:648.9px;top:232.8px;" width="9" height="9" viewBox="0 0 9 9"><path d="M4.5 0.4V8.6M0.4 4.5H8.6" stroke="#ececec" stroke-width="0.8"/><path d="M4.5 0L5.9 1.7H3.1ZM4.5 9L5.9 7.3H3.1ZM0 4.5L1.7 3.1V5.9ZM9 4.5L7.3 3.1V5.9Z" fill="#ececec"/></svg>
<svg style="left:660.8px;top:232.6px;" width="7.4" height="9.2" viewBox="0 0 7.4 9.2"><rect x="0.3" y="4" width="6.8" height="4.9" rx="0.6" fill="#ececec"/><path d="M1.7 4.2V2.6A2 2 0 0 1 5.7 2.6V4.2" stroke="#ececec" stroke-width="1" fill="none"/></svg>
<span style="left:673.20px;top:232.58px;font-size:7.7px;line-height:9.24px;letter-spacing:-0.194px;color:#d6d6d6;">Fill:</span>
<div style="left:685.8px;top:230.8px;width:23px;height:12.6px;background:#2e2e2e;border-radius:1px;"></div>
<span style="left:687.60px;top:232.58px;font-size:7.7px;line-height:9.24px;letter-spacing:-0.098px;color:#e4e4e4;">100%</span>
<svg style="left:711.2px;top:234.8px;" width="5.6" height="5" viewBox="0 0 5.6 5"><path d="M0.2 0.3H5.4L2.8 4.7Z" fill="#f0f0f0"/></svg>
<div style="left:604.4px;top:245.8px;width:143.8px;height:23.4px;background:#626262;"></div>
<svg style="left:608.6px;top:254.6px;" width="7.4" height="5.6" viewBox="0 0 7.4 5.6"><path d="M0.4 2.8Q3.7 -1.2 7 2.8Q3.7 6.8 0.4 2.8Z" fill="none" stroke="#e6e6e6" stroke-width="0.7"/><circle cx="3.7" cy="2.8" r="1.1" fill="#e6e6e6"/></svg>
<svg style="left:620.5px;top:246.7px;" width="15" height="21" viewBox="0 0 15 21"><rect width="15" height="21" fill="#fff"/><rect x="0.00" y="0.00" width="1.5" height="1.5" fill="#1e1e1e"/><rect x="0.00" y="3.00" width="1.5" height="1.5" fill="#1e1e1e"/><rect x="0.00" y="6.00" width="1.5" height="1.5" fill="#1e1e1e"/><rect x="0.00" y="9.00" width="1.5" height="1.5" fill="#1e1e1e"/><rect x="0.00" y="12.00" width="1.5" height="1.5" fill="#1e1e1e"/><rect x="0.00" y="15.00" width="1.5" height="1.5" fill="#1e1e1e"/><rect x="0.00" y="18.00" width="1.5" height="1.5" fill="#1e1e1e"/><rect x="1.50" y="1.50" width="1.5" height="1.5" fill="#1e1e1e"/><rect x="1.50" y="4.50" width="1.5" height="1.5" fill="#1e1e1e"/><rect x="1.50" y="7.50" width="1.5" height="1.5" fill="#1e1e1e"/><rect x="1.50" y="10.50" width="1.5" height="1.5" fill="#1e1e1e"/><rect x="1.50" y="13.50" width="1.5" height="1.5" fill="#1e1e1e"/><rect x="1.50" y="16.50" width="1.5" height="1.5" fill="#1e1e1e"/><rect x="1.50" y="19.50" width="1.5" height="1.5" fill="#1e1e1e"/><rect x="3.00" y="0.00" width="1.5" height="1.5" fill="#1e1e1e"/><rect x="3.00" y="3.00" width="1.5" height="1.5" fill="#1e1e1e"/><rect x="3.00" y="6.00" width="1.5" height="1.5" fill="#1e1e1e"/><rect x="3.00" y="9.00" width="1.5" height="1.5" fill="#1e1e1e"/><rect x="3.00" y="12.00" width="1.5" height="1.5" fill="#1e1e1e"/><rect x="3.00" y="15.00" width="1.5" height="1.5" fill="#1e1e1e"/><rect x="3.00" y="18.00" width="1.5" height="1.5" fill="#1e1e1e"/><rect x="4.50" y="1.50" width="1.5" height="1.5" fill="#1e1e1e"/><rect x="4.50" y="4.50" width="1.5" height="1.5" fill="#1e1e1e"/><rect x="4.50" y="7.50" width="1.5" height="1.5" fill="#1e1e1e"/><rect x="4.50" y="10.50" width="1.5" height="1.5" fill="#1e1e1e"/><rect x="4.50" y="13.50" width="1.5" height="1.5" fill="#1e1e1e"/><rect x="4.50" y="16.50" width="1.5" height="1.5" fill="#1e1e1e"/><rect x="4.50" y="19.50" width="1.5" height="1.5" fill="#1e1e1e"/><rect x="6.00" y="0.00" width="1.5" height="1.5" fill="#1e1e1e"/><rect x="6.00" y="3.00" width="1.5" height="1.5" fill="#1e1e1e"/><rect x="6.00" y="6.00" width="1.5" height="1.5" fill="#1e1e1e"/><rect x="6.00" y="9.00" width="1.5" height="1.5" fill="#1e1e1e"/><rect x="6.00" y="12.00" width="1.5" height="1.5" fill="#1e1e1e"/><rect x="6.00" y="15.00" width="1.5" height="1.5" fill="#1e1e1e"/><rect x="6.00" y="18.00" width="1.5" height="1.5" fill="#1e1e1e"/><rect x="7.50" y="1.50" width="1.5" height="1.5" fill="#1e1e1e"/><rect x="7.50" y="4.50" width="1.5" height="1.5" fill="#1e1e1e"/><rect x="7.50" y="7.50" width="1.5" height="1.5" fill="#1e1e1e"/><rect x="7.50" y="10.50" width="1.5" height="1.5" fill="#1e1e1e"/><rect x="7.50" y="13.50" width="1.5" height="1.5" fill="#1e1e1e"/><rect x="7.50" y="16.50" width="1.5" height="1.5" fill="#1e1e1e"/><rect x="7.50" y="19.50" width="1.5" height="1.5" fill="#1e1e1e"/><rect x="9.00" y="0.00" width="1.5" height="1.5" fill="#1e1e1e"/><rect x="9.00" y="3.00" width="1.5" height="1.5" fill="#1e1e1e"/><rect x="9.00" y="6.00" width="1.5" height="1.5" fill="#1e1e1e"/><rect x="9.00" y="9.00" width="1.5" height="1.5" fill="#1e1e1e"/><rect x="9.00" y="12.00" width="1.5" height="1.5" fill="#1e1e1e"/><rect x="9.00" y="15.00" width="1.5" height="1.5" fill="#1e1e1e"/><rect x="9.00" y="18.00" width="1.5" height="1.5" fill="#1e1e1e"/><rect x="10.50" y="1.50" width="1.5" height="1.5" fill="#1e1e1e"/><rect x="10.50" y="4.50" width="1.5" height="1.5" fill="#1e1e1e"/><rect x="10.50" y="7.50" width="1.5" height="1.5" fill="#1e1e1e"/><rect x="10.50" y="10.50" width="1.5" height="1.5" fill="#1e1e1e"/><rect x="10.50" y="13.50" width="1.5" height="1.5" fill="#1e1e1e"/><rect x="10.50" y="16.50" width="1.5" height="1.5" fill="#1e1e1e"/><rect x="10.50" y="19.50" width="1.5" height="1.5" fill="#1e1e1e"/><rect x="12.00" y="0.00" width="1.5" height="1.5" fill="#1e1e1e"/><rect x="12.00" y="3.00" width="1.5" height="1.5" fill="#1e1e1e"/><rect x="12.00" y="6.00" width="1.5" height="1.5" fill="#1e1e1e"/><rect x="12.00" y="9.00" width="1.5" height="1.5" fill="#1e1e1e"/><rect x="12.00" y="12.00" width="1.5" height="1.5" fill="#1e1e1e"/><rect x="12.00" y="15.00" width="1.5" height="1.5" fill="#1e1e1e"/><rect x="12.00" y="18.00" width="1.5" height="1.5" fill="#1e1e1e"/><rect x="13.50" y="1.50" width="1.5" height="1.5" fill="#1e1e1e"/><rect x="13.50" y="4.50" width="1.5" height="1.5" fill="#1e1e1e"/><rect x="13.50" y="7.50" width="1.5" height="1.5" fill="#1e1e1e"/><rect x="13.50" y="10.50" width="1.5" height="1.5" fill="#1e1e1e"/><rect x="13.50" y="13.50" width="1.5" height="1.5" fill="#1e1e1e"/><rect x="13.50" y="16.50" width="1.5" height="1.5" fill="#1e1e1e"/><rect x="13.50" y="19.50" width="1.5" height="1.5" fill="#1e1e1e"/><defs><linearGradient id="tg" x1="0" y1="0" x2="0" y2="1"><stop offset="0" stop-color="#f3f2f3"/><stop offset="0.55" stop-color="#f1f0f1"/><stop offset="0.64" stop-color="#e6dad6"/><stop offset="1" stop-color="#c4aaa0"/></linearGradient></defs><rect x="1.9" y="1.6" width="11.2" height="17.8" fill="url(#tg)"/><rect x="6.2" y="10.2" width="1.5" height="5.6" fill="#222"/><rect x="5.2" y="11.8" width="2.6" height="2.2" fill="#d8a018"/><rect x="5.6" y="17" width="2.4" height="2.2" fill="#7a6030" opacity="0.7"/></svg>
<span style="left:639.80px;top:248.58px;font-size:7.7px;line-height:9.24px;letter-spacing:0.034px;color:#d2d2d2;">Background</span>
<div style="left:604.4px;top:269.2px;width:143.8px;height:146px;background:#444444;"></div>
<div style="left:748.2px;top:245.8px;width:5px;height:169.4px;background:#393939;"></div>
<svg style="left:656px;top:419.8px;" width="94" height="9" viewBox="0 0 94 9"><rect x="0.6" y="2.6" width="3.4" height="2.8" rx="1.4" fill="none" stroke="#d8d8d8" stroke-width="0.9"/><rect x="4.2" y="2.6" width="3.4" height="2.8" rx="1.4" fill="none" stroke="#d8d8d8" stroke-width="0.9"/><path d="M2.6 4H5.6" stroke="#d8d8d8" stroke-width="0.9"/><text x="13.4" y="6" font-family="Liberation Sans" font-style="italic" font-size="6.2" fill="#9a9a9a">eff</text><circle cx="32.6" cy="4" r="3.7" fill="none" stroke="#d8d8d8" stroke-width="0.8"/><path d="M32.6 0.3A3.7 3.7 0 0 0 32.6 7.7Z" fill="#d8d8d8"/><rect x="42" y="0.8" width="9" height="6.6" rx="0.5" fill="#d8d8d8"/><circle cx="46.5" cy="4.1" r="1.9" fill="#474747"/><path d="M56 1H59.6L60.6 2H65V7.4H56Z" fill="#d8d8d8"/><path d="M70.2 0.6H77.6V7.8H72.6L70.2 5.4Z" fill="none" stroke="#d8d8d8" stroke-width="0.8"/><path d="M70.2 5.4H72.6V7.8" fill="none" stroke="#d8d8d8" stroke-width="0.7"/><path d="M84 1.6H91L90.2 8H84.8Z" fill="#d8d8d8"/><rect x="83.4" y="0.4" width="8.2" height="1" fill="#d8d8d8"/></svg>
<svg style="left:12.2px;top:443.6px;" width="6.6" height="8.8" viewBox="0 0 6.6 8.8"><path d="M0.3 0.3H4.4L6.3 2.2V8.5H0.3Z" fill="#f1f3f4"/><rect x="1.6" y="3.4" width="3.4" height="3.2" fill="#3f7ee8"/></svg>
<span style="left:27.20px;top:443.84px;font-size:7.6px;line-height:9.12px;letter-spacing:0.062px;color:#e8eaed;">sea.jfif</span>
<svg style="left:115.6px;top:445.8px;" width="6" height="4" viewBox="0 0 6 4"><path d="M0.5 3.4L3 0.8L5.5 3.4" stroke="#dadce0" stroke-width="0.9" fill="none"/></svg>
<div style="left:131px;top:436px;width:0.6px;height:23.6px;background:#55575b;"></div>
<div style="left:790px;top:440.2px;width:43px;height:15.6px;background:#28292c;border-radius:1.6px;"></div>
<span style="left:798.50px;top:443.64px;font-size:7.6px;line-height:9.12px;letter-spacing:-0.232px;color:#8ab4f8;">Show all</span>
<svg style="left:841px;top:445.2px;" width="5.8" height="5.8" viewBox="0 0 5.8 5.8"><path d="M0.6 0.6L5.2 5.2M5.2 0.6L0.6 5.2" stroke="#eceef0" stroke-width="0.95"/></svg>
</div></body></html>
